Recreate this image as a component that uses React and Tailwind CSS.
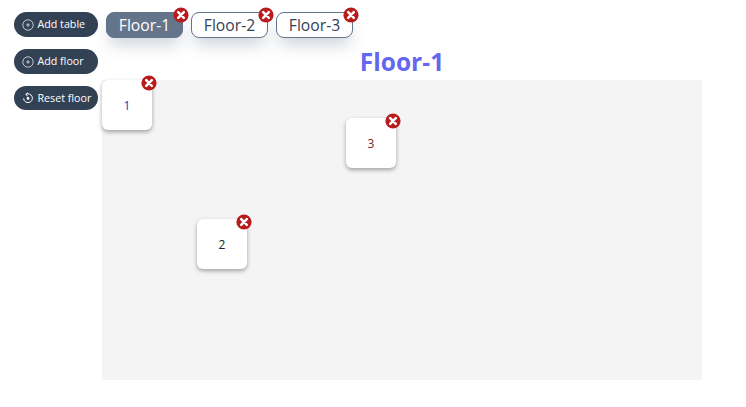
const font = "font-['Open_Sans','Noto_Sans',sans-serif]";

function CloseBadge({ className }) {
  return (
    <svg viewBox="0 0 16 16" className={`absolute h-[16px] w-[16px] ${className}`}>
      <circle cx="8" cy="8" r="7.6" fill="#b91c1c" />
      <path d="M5.2 5.2l5.6 5.6M10.8 5.2l-5.6 5.6" stroke="#fff" strokeWidth="2.5" strokeLinecap="round" />
    </svg>
  );
}

function AddIcon() {
  return (
    <svg viewBox="0 0 12 12" className="h-[12px] w-[12px] shrink-0" fill="none" stroke="#fff" strokeWidth="0.7">
      <circle cx="6" cy="6" r="5.2" />
      <path d="M6 4.2v3.6M4.2 6h3.6" />
    </svg>
  );
}

function ResetIcon() {
  return (
    <svg viewBox="0 0 12 12" className="h-[12px] w-[12px] shrink-0" fill="none" stroke="#fff" strokeWidth="1">
      <path d="M3.8 2.4A4.4 4.4 0 1 1 1.6 6.4" />
      <path d="M6 0.8L3.8 2.4l2 1.8" />
      <circle cx="6" cy="6.4" r="1.3" fill="#fff" stroke="none" />
    </svg>
  );
}

function SideButton({ icon, label, className }) {
  return (
    <button className={`flex w-[84px] items-center gap-[3.5px] rounded-full bg-[#334155] pl-[8px] text-[10.7px] whitespace-nowrap text-white ${className}`}>
      {icon}
      {label}
    </button>
  );
}

function FloorTab({ name, active }) {
  return (
    <div className="relative">
      <button
        className={`flex h-[26px] w-[77px] items-center justify-center rounded-[8px] border border-[#64748b] pt-[1px] text-[15.7px] shadow-[0_10px_15px_-3px_rgba(100,116,139,0.3)] ${
          active ? 'bg-[#64748b] text-white' : 'bg-white text-[#334155]'
        }`}
      >
        {name}
      </button>
      <CloseBadge className="-top-[5px] -right-[6px]" />
    </div>
  );
}

function Table({ num, pos, color }) {
  return (
    <div className={`absolute flex h-[50px] w-[50px] items-center justify-center rounded-[6px] bg-white pt-[2px] text-[12px] shadow-[0_2px_4px_rgba(0,0,0,0.35)] ${pos} ${color}`}>
      {num}
      <CloseBadge className="-top-[5px] -right-[5px]" />
    </div>
  );
}

export default function App() {
  return (
    <div className={`flex h-[407px] w-[746px] bg-white pt-[12px] ${font}`}>
      <div className="flex w-[102px] shrink-0 flex-col gap-[12px] pl-[14px]">
        <SideButton icon={<AddIcon />} label="Add table" className="h-[25px]" />
        <SideButton icon={<AddIcon />} label="Add floor" className="h-[25px]" />
        <SideButton icon={<ResetIcon />} label="Reset floor" className="h-[24px]" />
      </div>
      <div className="flex w-[600px] flex-col">
        <div className="flex gap-[8px] pl-[4px]">
          <FloorTab name="Floor-1" active />
          <FloorTab name="Floor-2" />
          <FloorTab name="Floor-3" />
        </div>
        <h1 className="flex h-[42px] items-center justify-center pt-[6px] text-[24.5px] font-bold text-[#6366f1]">Floor-1</h1>
        <div className="relative h-[300px] bg-[#f4f4f4]">
          <Table num="1" pos="top-0 left-0" color="text-[#1e40af]" />
          <Table num="2" pos="top-[139px] left-[95px]" color="text-[#222]" />
          <Table num="3" pos="top-[38px] left-[244px]" color="text-[#7f1d1d]" />
        </div>
      </div>
    </div>
  );
}
